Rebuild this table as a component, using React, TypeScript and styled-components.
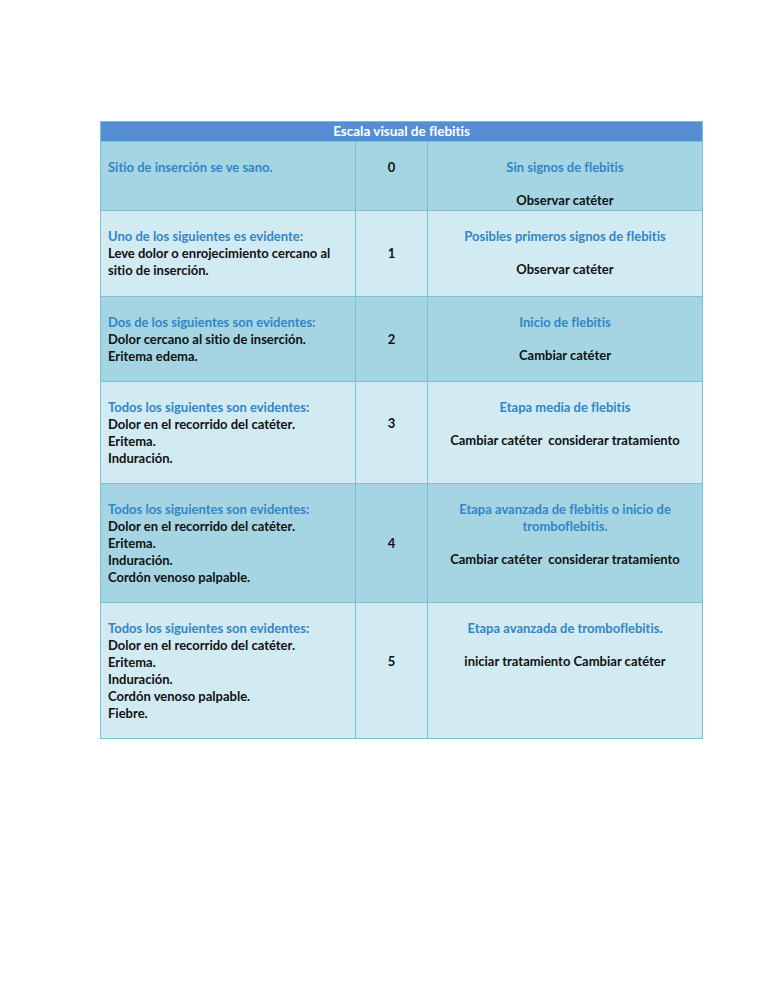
import React from "react";
import styled, { createGlobalStyle } from "styled-components";

type Row = {
  score: string;
  lead: string;
  lines: string[];
  stage: string;
  action: string;
  height: number;
  topScore?: boolean;
  lift?: number;
};

const rows: Row[] = [
  {
    score: "0",
    lead: "Sitio de inserción se ve sano.",
    lines: [],
    stage: "Sin signos de flebitis",
    action: "Observar catéter",
    height: 69,
    topScore: true,
  },
  {
    score: "1",
    lead: "Uno de los siguientes es evidente:",
    lines: ["Leve dolor o enrojecimiento cercano al sitio de inserción."],
    stage: "Posibles primeros signos de flebitis",
    action: "Observar catéter",
    height: 86,
  },
  {
    score: "2",
    lead: "Dos de los siguientes son evidentes:",
    lines: ["Dolor cercano al sitio de inserción.", "Eritema edema."],
    stage: "Inicio de flebitis",
    action: "Cambiar catéter",
    height: 85,
  },
  {
    score: "3",
    lead: "Todos los siguientes son evidentes:",
    lines: ["Dolor en el recorrido del catéter.", "Eritema.", "Induración."],
    stage: "Etapa media de flebitis",
    action: "Cambiar catéter  considerar tratamiento",
    height: 102,
    lift: 18,
  },
  {
    score: "4",
    lead: "Todos los siguientes son evidentes:",
    lines: [
      "Dolor en el recorrido del catéter.",
      "Eritema.",
      "Induración.",
      "Cordón venoso palpable.",
    ],
    stage: "Etapa avanzada de flebitis o inicio de tromboflebitis.",
    action: "Cambiar catéter  considerar tratamiento",
    height: 119,
  },
  {
    score: "5",
    lead: "Todos los siguientes son evidentes:",
    lines: [
      "Dolor en el recorrido del catéter.",
      "Eritema.",
      "Induración.",
      "Cordón venoso palpable.",
      "Fiebre.",
    ],
    stage: "Etapa avanzada de tromboflebitis.",
    action: "iniciar tratamiento Cambiar catéter",
    height: 136,
    lift: 18,
  },
];

const GlobalStyle = createGlobalStyle`
  body {
    margin: 0;
    background: #ffffff;
    font-family: "Lato", "Open Sans", sans-serif;
    font-variant-ligatures: none;
  }
`;

const Page = styled.div`
  width: 768px;
  min-height: 994px;
  padding-top: 121px;
  box-sizing: border-box;
`;

const Table = styled.div`
  width: 603px;
  margin-left: 100px;
  border: 1px solid #78c0d4;
  box-sizing: border-box;
  font-size: 13px;
  font-weight: 700;
  line-height: 17px;
  color: #111111;
`;

const Header = styled.div`
  height: 19px;
  background: #558ed5;
  color: #ffffff;
  text-align: center;
  line-height: 19px;
  font-size: 13.5px;
`;

const RowBox = styled.div<{ $dark: boolean; $h: number }>`
  display: grid;
  grid-template-columns: 255px 72px 1fr;
  height: ${(p) => p.$h}px;
  box-sizing: border-box;
  background: ${(p) => (p.$dark ? "#a5d5e2" : "#d2eaf1")};
  border-top: 1px solid #78c0d4;
`;

const Cell = styled.div`
  padding: 17px 7px 0;
  box-sizing: border-box;
`;

const Criteria = styled(Cell)`
  border-right: 1px solid #78c0d4;
`;

const Score = styled(Cell)<{ $top?: boolean; $lift?: number }>`
  display: flex;
  justify-content: center;
  align-items: ${(p) => (p.$top ? "flex-start" : "center")};
  padding-top: ${(p) => (p.$top ? "17px" : "0")};
  padding-bottom: ${(p) => p.$lift ?? 0}px;
  border-right: 1px solid #78c0d4;
`;

const Outcome = styled(Cell)`
  text-align: center;
  padding: 17px 14px 0;
`;

const Blue = styled.div`
  color: #3186c8;
`;

const Action = styled.div`
  margin-top: 16px;
  white-space: pre-wrap;
`;

export default function App() {
  return (
    <Page>
      <GlobalStyle />
      <Table>
        <Header>Escala visual de flebitis</Header>
        {rows.map((r, i) => (
          <RowBox key={r.score} $dark={i % 2 === 0} $h={r.height}>
            <Criteria>
              <Blue>{r.lead}</Blue>
              {r.lines.map((l) => (
                <div key={l}>{l}</div>
              ))}
            </Criteria>
            <Score $top={r.topScore} $lift={r.lift}>
              {r.score}
            </Score>
            <Outcome>
              <Blue>{r.stage}</Blue>
              <Action>{r.action}</Action>
            </Outcome>
          </RowBox>
        ))}
      </Table>
    </Page>
  );
}
